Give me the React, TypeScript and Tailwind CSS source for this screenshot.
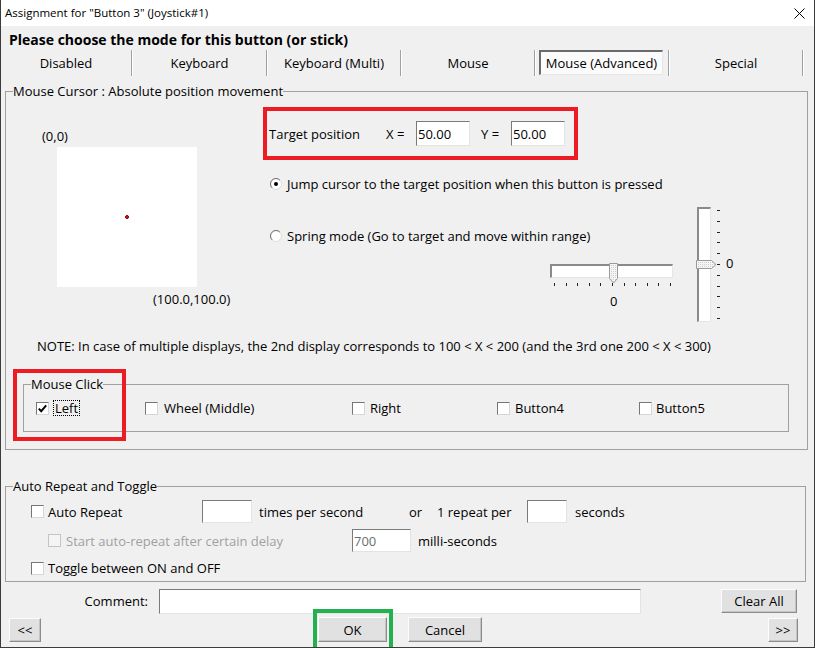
import React from "react";

function Checkbox({ checked = false, disabled = false }: { checked?: boolean; disabled?: boolean }) {
  return (
    <span
      className={
        disabled
          ? "flex h-[13px] w-[13px] shrink-0 items-center justify-center border border-[#c4c4c4] bg-[#f4f4f4]"
          : "flex h-[13px] w-[13px] shrink-0 items-center justify-center border border-t-[#767676] border-l-[#767676] border-r-[#d6d6d6] border-b-[#d6d6d6] bg-white"
      }
    >
      {checked && (
        <svg width="11" height="11" viewBox="0 0 11 11">
          <path d="M1.8 5.6 L4.2 8.2 L9.2 2.4" fill="none" stroke="#000" strokeWidth="1.9" />
        </svg>
      )}
    </span>
  );
}

function Radio({ checked = false }: { checked?: boolean }) {
  return (
    <svg width="12" height="12" viewBox="0 0 12 12" className="shrink-0">
      <circle cx="6" cy="6" r="5.5" fill="#fff" stroke="#dcdcdc" />
      <path d="M2.11 9.89 A5.5 5.5 0 0 1 9.89 2.11" fill="none" stroke="#707070" />
      {checked && <circle cx="6" cy="6" r="2" fill="#000" />}
    </svg>
  );
}

function Field({ className = "", children }: { className?: string; children?: React.ReactNode }) {
  return (
    <div
      className={
        "flex items-center border border-t-[#7a7a7a] border-l-[#7a7a7a] border-r-[#e3e3e3] border-b-[#e3e3e3] bg-white pl-[1px] " +
        className
      }
    >
      {children}
    </div>
  );
}

function Btn({ className = "", children }: { className?: string; children?: React.ReactNode }) {
  return (
    <div
      className={
        "flex items-center justify-center border border-t-[#fcfcfc] border-l-[#fcfcfc] border-r-[#8c8c8c] border-b-[#8c8c8c] bg-[#e1e1e1] shadow-[inset_-1px_-1px_0_#c4c4c4] " +
        className
      }
    >
      {children}
    </div>
  );
}

function Sep() {
  return (
    <div className="flex w-[2px] shrink-0">
      <div className="w-px bg-[#a0a0a0]" />
      <div className="w-px bg-white" />
    </div>
  );
}

function Tab({ w, children }: { w: string; children: React.ReactNode }) {
  return <div className={"flex shrink-0 items-center justify-center " + w}>{children}</div>;
}

export default function App() {
  const ticks = Array.from({ length: 11 });
  return (
    <div className="relative h-[648px] w-[815px] overflow-hidden border-x border-b border-[#3b3b3b] bg-[#f0f0f0] font-['Open_Sans','Noto_Sans',sans-serif] text-[13px] leading-[18px] text-black">
      {/* Title bar */}
      <div className="flex h-[26px] items-center justify-between bg-white pl-[4px] pr-[9px] text-[11.5px]">
        <span>Assignment for "Button 3" (Joystick#1)</span>
        <svg width="11" height="11" viewBox="0 0 11 11">
          <path d="M0.5 0.5 L10.5 10.5 M10.5 0.5 L0.5 10.5" stroke="#000" strokeWidth="1" fill="none" />
        </svg>
      </div>

      {/* Heading */}
      <div className="mt-[5px] h-[18px] pl-[8px] text-[14px] font-bold leading-[18px]">
        Please choose the mode for this button (or stick)
      </div>

      {/* Tabs */}
      <div className="mt-[1px] flex h-[26px]">
        <Tab w="w-[130px]">Disabled</Tab>
        <Sep />
        <Tab w="w-[133px]">Keyboard</Tab>
        <Sep />
        <Tab w="w-[132px]">Keyboard (Multi)</Tab>
        <Sep />
        <Tab w="w-[132px]">Mouse</Tab>
        <Sep />
        <div className="flex w-[132px] shrink-0 items-start pl-[3px]">
          <div className="flex h-[25px] w-[124px] items-center justify-center border-t-2 border-l-2 border-r border-b border-t-[#6b6b6b] border-l-[#6b6b6b] border-r-[#e6e6e6] border-b-[#e6e6e6] bg-[#fbfbfb]">
            Mouse (Advanced)
          </div>
        </div>
        <Sep />
        <Tab w="w-[132px]">Special</Tab>
        <Sep />
      </div>

      {/* Main group */}
      <fieldset className="ml-[4px] mt-[6px] w-[803px] border border-[#a0a0a0] pb-[17px]">
        <legend className="ml-[7px] leading-[18px]">Mouse Cursor : Absolute position movement</legend>

        <div className="flex h-[222px]">
          {/* Left: canvas */}
          <div className="flex w-[257px] shrink-0 flex-col">
            <div className="ml-[36px] mt-[27px] h-[18px]">(0,0)</div>
            <div className="relative ml-[51px] mt-[2px] h-[140px] w-[140px] bg-white">
              <div className="absolute left-[68px] top-[68px] h-[4px] w-[4px] rounded-full border border-[#6a0000] bg-[#ff1010]" />
            </div>
            <div className="ml-[147px] mt-[3px] h-[18px]">(100.0,100.0)</div>
          </div>

          {/* Right */}
          <div className="flex flex-col">
            <div className="mt-[7px] flex h-[53px] w-[315px] items-center border-4 border-[#ed1c24] pl-[2px]">
              <span className="w-[117px] shrink-0">Target position</span>
              <span className="w-[30px] shrink-0">X =</span>
              <Field className="h-[25px] w-[54px]">50.00</Field>
              <span className="ml-[11px] w-[30px] shrink-0">Y =</span>
              <Field className="h-[25px] w-[54px]">50.00</Field>
            </div>

            <div className="mt-[15px] flex h-[18px] items-center gap-[5px] pl-[7px]">
              <Radio checked />
              <span>Jump cursor to the target position when this button is pressed</span>
            </div>

            <div className="flex">
              <div className="flex w-[434px] shrink-0 flex-col">
                <div className="mt-[34px] flex h-[18px] items-center gap-[5px] pl-[7px]">
                  <Radio />
                  <span>Spring mode (Go to target and move within range)</span>
                </div>
                <div className="ml-[287px] mt-[19px] flex flex-col">
                  <div className="relative h-[14px] w-[123px] border-t-2 border-l-2 border-r border-b border-t-[#8a8a8a] border-l-[#8a8a8a] border-r-[#e6e6e6] border-b-[#e6e6e6] bg-white">
                    <svg width="9" height="21" viewBox="0 0 9 21" className="absolute left-[57px] top-[-3px]">
                      <defs>
                        <pattern id="hp" width="2" height="2" patternUnits="userSpaceOnUse">
                          <rect width="2" height="2" fill="#f4f4f4" />
                          <rect width="1" height="1" fill="#d0d0d0" />
                        </pattern>
                      </defs>
                      <polygon points="0.5,0.5 8.5,0.5 8.5,15.5 4.5,20 0.5,15.5" fill="url(#hp)" stroke="#9a9a9a" />
                    </svg>
                  </div>
                  <div className="ml-[4px] mt-[5px] flex w-[117px] justify-between">
                    {ticks.map((_, i) => (
                      <div key={i} className="h-[3px] w-px bg-[#222]" />
                    ))}
                  </div>
                  <div className="ml-[60px] mt-[6px] h-[18px]">0</div>
                </div>
              </div>

              <div className="mt-[14px] flex items-start">
                <div className="relative h-[115px] w-[14px] border-t-2 border-l-2 border-r border-b border-t-[#8a8a8a] border-l-[#8a8a8a] border-r-[#e6e6e6] border-b-[#e6e6e6] bg-white">
                  <svg width="21" height="9" viewBox="0 0 21 9" className="absolute left-[-3px] top-[51px]">
                    <defs>
                      <pattern id="vp" width="2" height="2" patternUnits="userSpaceOnUse">
                        <rect width="2" height="2" fill="#f4f4f4" />
                        <rect width="1" height="1" fill="#d0d0d0" />
                      </pattern>
                    </defs>
                    <polygon points="0.5,0.5 15.5,0.5 20,4.5 15.5,8.5 0.5,8.5" fill="url(#vp)" stroke="#9a9a9a" />
                  </svg>
                </div>
                <div className="ml-[6px] mt-[3px] flex h-[109px] flex-col justify-between">
                  {ticks.map((_, i) => (
                    <div key={i} className="h-px w-[3px] bg-[#222]" />
                  ))}
                </div>
                <div className="ml-[6px] mt-[47px] h-[18px]">0</div>
              </div>
            </div>
          </div>
        </div>

        <div className="ml-[31px] mt-[15px] h-[18px]">
          NOTE: In case of multiple displays, the 2nd display corresponds to 100 &lt; X &lt; 200 (and the 3rd one 200 &lt; X &lt; 300)
        </div>

        <fieldset className="ml-[17px] mt-[20px] w-[766px] border border-[#a0a0a0] pb-[14px] pt-[6px]">
          <legend className="ml-[7px] leading-[18px]">Mouse Click</legend>
          <div className="flex h-[18px] items-center pl-[12px]">
            <div className="flex w-[109px] shrink-0 items-center">
              <Checkbox checked />
              <span className="ml-[4px] border border-dotted border-black px-[1px] leading-[14px]">Left</span>
            </div>
            <div className="flex w-[207px] shrink-0 items-center gap-[6px]">
              <Checkbox />
              <span>Wheel (Middle)</span>
            </div>
            <div className="flex w-[145px] shrink-0 items-center gap-[5px]">
              <Checkbox />
              <span>Right</span>
            </div>
            <div className="flex w-[142px] shrink-0 items-center gap-[5px]">
              <Checkbox />
              <span>Button4</span>
            </div>
            <div className="flex items-center gap-[4px]">
              <Checkbox />
              <span>Button5</span>
            </div>
          </div>
        </fieldset>
      </fieldset>

      {/* Auto repeat group */}
      <fieldset className="ml-[4px] mt-[27px] w-[801px] border border-[#a0a0a0] pb-[4px]">
        <legend className="ml-[7px] leading-[18px]">Auto Repeat and Toggle</legend>
        <div className="mt-[5px] flex h-[23px] items-center">
          <div className="flex w-[196px] shrink-0 items-center gap-[4px] pl-[25px]">
            <Checkbox />
            <span>Auto Repeat</span>
          </div>
          <Field className="h-[23px] w-[50px]" />
          <span className="ml-[7px] w-[150px] shrink-0">times per second</span>
          <span className="w-[28px] shrink-0">or</span>
          <span className="w-[90px] shrink-0">1 repeat per</span>
          <Field className="h-[23px] w-[40px]" />
          <span className="ml-[8px]">seconds</span>
        </div>
        <div className="mt-[6px] flex h-[23px] items-center">
          <div className="flex w-[346px] shrink-0 items-center gap-[5px] pl-[42px] text-[#a0a0a0]">
            <Checkbox disabled />
            <span>Start auto-repeat after certain delay</span>
          </div>
          <Field className="h-[23px] w-[59px] text-[#6d6d6d]">700</Field>
          <span className="ml-[7px]">milli-seconds</span>
        </div>
        <div className="mt-[7px] flex h-[18px] items-center gap-[4px] pl-[25px]">
          <Checkbox />
          <span>Toggle between ON and OFF</span>
        </div>
      </fieldset>

      {/* Comment row */}
      <div className="mt-[7px] flex h-[25px] items-start">
        <span className="w-[147px] shrink-0 text-right leading-[25px]">Comment:</span>
        <Field className="ml-[11px] h-[25px] w-[482px]" />
        <Btn className="ml-[80px] h-[24px] w-[76px]">Clear All</Btn>
      </div>

      {/* Buttons row */}
      <div className="mt-[3px] flex items-start">
        <Btn className="ml-[8px] mt-[1px] h-[24px] w-[32px]">&lt;&lt;</Btn>
        <Btn className="ml-[277px] h-[25px] w-[69px]">OK</Btn>
        <Btn className="ml-[21px] h-[25px] w-[74px]">Cancel</Btn>
        <Btn className="ml-auto mr-[16px] mt-[1px] h-[24px] w-[30px]">&gt;&gt;</Btn>
      </div>

      {/* Annotation overlays */}
      <div className="pointer-events-none absolute left-[12px] top-[369px] h-[72px] w-[113px] border-4 border-[#ed1c24]" />
      <div className="pointer-events-none absolute left-[312px] top-[609px] h-[45px] w-[80px] border-4 border-[#22b14c]" />
    </div>
  );
}
